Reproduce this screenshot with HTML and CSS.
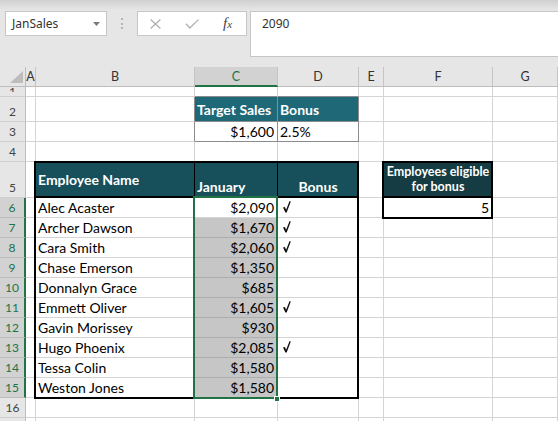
FILE: index.html
```html
<!DOCTYPE html>
<html>
<head>
<meta charset="utf-8">
<link rel="stylesheet" href="styles.css">
</head>
<body>
<div class="fbar">
  <div class="namebox"><span>JanSales</span><svg class="caret" width="7" height="4" viewBox="0 0 7 4"><path d="M0 0H7L3.5 4Z" fill="#7a7a7a"/></svg></div>
  <div class="grip"><i></i><i></i><i></i></div>
  <div class="btns">
    <svg width="11" height="10" viewBox="0 0 11 10"><path d="M0.6 0.5L10.4 9.5M10.4 0.5L0.6 9.5" stroke="#b0b0b0" stroke-width="1.2" fill="none"/></svg>
    <svg width="14" height="10" viewBox="0 0 14 10"><path d="M1 4.8L4.8 9L13.4 0.6" stroke="#b0b0b0" stroke-width="1.3" fill="none"/></svg>
    <span class="fx">f<small>x</small></span>
  </div>
  <div class="finput">2090</div>
</div>
<div class="sheetwrap">
<div class="sheet">
  <div class="corner"><svg width="13" height="12" viewBox="0 0 13 12"><path d="M0 12L13 0V12Z" fill="#bdbdbd"/></svg></div>
  <div class="ch">A</div><div class="ch">B</div><div class="ch sel">C</div><div class="ch">D</div><div class="ch">E</div><div class="ch">F</div><div class="ch">G</div>

  <div class="rh r1"><span>1</span></div><div class="c"></div><div class="c"></div><div class="c bt"></div><div class="c bt"></div><div class="c"></div><div class="c"></div><div class="c"></div>

  <div class="rh">2</div><div class="c"></div><div class="c bb"></div><div class="c ts">Target Sales</div><div class="c ts">Bonus</div><div class="c"></div><div class="c"></div><div class="c"></div>

  <div class="rh">3</div><div class="c"></div><div class="c bb"></div><div class="c g r">$1,600</div><div class="c g">2.5%</div><div class="c"></div><div class="c"></div><div class="c"></div>

  <div class="rh">4</div><div class="c"></div><div class="c"></div><div class="c"></div><div class="c"></div><div class="c"></div><div class="c"></div><div class="c"></div>

  <div class="rh">5</div><div class="c"></div><div class="c hd mid">Employee Name</div><div class="c hd">January</div><div class="c hd ctr">Bonus</div><div class="c"></div><div class="c hf">Employees eligible for bonus</div><div class="c"></div>

  <div class="rh sel">6</div><div class="c"></div><div class="c">Alec Acaster</div><div class="c r">$2,090</div><div class="c"><svg class="ck" width="8" height="12" viewBox="0 0 8 12"><path d="M0 6.6L1.9 5.9L3.1 8.7L6.6 0L7.8 0.5L3.7 11.6L2.4 11.6Z" fill="#111"/></svg></div><div class="c"></div><div class="c r">5</div><div class="c"></div>

  <div class="rh sel">7</div><div class="c"></div><div class="c">Archer Dawson</div><div class="c r sc">$1,670</div><div class="c"><svg class="ck" width="8" height="12" viewBox="0 0 8 12"><path d="M0 6.6L1.9 5.9L3.1 8.7L6.6 0L7.8 0.5L3.7 11.6L2.4 11.6Z" fill="#111"/></svg></div><div class="c"></div><div class="c"></div><div class="c"></div>

  <div class="rh sel">8</div><div class="c"></div><div class="c">Cara Smith</div><div class="c r sc">$2,060</div><div class="c"><svg class="ck" width="8" height="12" viewBox="0 0 8 12"><path d="M0 6.6L1.9 5.9L3.1 8.7L6.6 0L7.8 0.5L3.7 11.6L2.4 11.6Z" fill="#111"/></svg></div><div class="c"></div><div class="c"></div><div class="c"></div>

  <div class="rh sel">9</div><div class="c"></div><div class="c">Chase Emerson</div><div class="c r sc">$1,350</div><div class="c"></div><div class="c"></div><div class="c"></div><div class="c"></div>

  <div class="rh sel">10</div><div class="c"></div><div class="c">Donnalyn Grace</div><div class="c r sc">$685</div><div class="c"></div><div class="c"></div><div class="c"></div><div class="c"></div>

  <div class="rh sel">11</div><div class="c"></div><div class="c">Emmett Oliver</div><div class="c r sc">$1,605</div><div class="c"><svg class="ck" width="8" height="12" viewBox="0 0 8 12"><path d="M0 6.6L1.9 5.9L3.1 8.7L6.6 0L7.8 0.5L3.7 11.6L2.4 11.6Z" fill="#111"/></svg></div><div class="c"></div><div class="c"></div><div class="c"></div>

  <div class="rh sel">12</div><div class="c"></div><div class="c">Gavin Morissey</div><div class="c r sc">$930</div><div class="c"></div><div class="c"></div><div class="c"></div><div class="c"></div>

  <div class="rh sel">13</div><div class="c"></div><div class="c">Hugo Phoenix</div><div class="c r sc">$2,085</div><div class="c"><svg class="ck" width="8" height="12" viewBox="0 0 8 12"><path d="M0 6.6L1.9 5.9L3.1 8.7L6.6 0L7.8 0.5L3.7 11.6L2.4 11.6Z" fill="#111"/></svg></div><div class="c"></div><div class="c"></div><div class="c"></div>

  <div class="rh sel">14</div><div class="c"></div><div class="c">Tessa Colin</div><div class="c r sc">$1,580</div><div class="c"></div><div class="c"></div><div class="c"></div><div class="c"></div>

  <div class="rh sel">15</div><div class="c"></div><div class="c">Weston Jones</div><div class="c r sc">$1,580</div><div class="c"></div><div class="c"></div><div class="c"></div><div class="c"></div>

  <div class="rh">16</div><div class="c"></div><div class="c"></div><div class="c"></div><div class="c"></div><div class="c"></div><div class="c"></div><div class="c"></div>

  <div class="rh"></div><div class="c"></div><div class="c"></div><div class="c"></div><div class="c"></div><div class="c"></div><div class="c"></div><div class="c"></div>
</div>
<div class="marks">
  <div class="tbl"></div>
  <div class="fbox"></div>
  <div class="selbox"><i class="handle"></i></div>
</div>
</div>
</body>
</html>
```

FILE: styles.css
```css
* { box-sizing: border-box; margin: 0; padding: 0; }
html, body { width: 558px; height: 421px; overflow: hidden; }
body { background: #e6e6e6; font-family: Lato, "Liberation Sans", sans-serif; color: #000; }

.fbar {
  height: 67px;
  display: flex;
  align-items: flex-start;
  padding: 11px 0 0 5px;
  background: linear-gradient(#d0d0d0, #e6e6e6 10px, #e6e6e6);
  font-family: "Noto Sans", "Open Sans", sans-serif;
  font-size: 12px;
  color: #333;
}
.namebox {
  width: 102px; height: 25px;
  background: #fff;
  border: 1px solid #c6c6c6;
  display: flex; align-items: center; justify-content: space-between;
  padding: 0 6px 0 6px;
}
.grip {
  width: 30px; height: 25px;
  display: flex; flex-direction: column; align-items: center; justify-content: center; gap: 2.5px;
}
.grip i { display: block; width: 2px; height: 2px; background: #b4b4b4; }
.btns {
  width: 110px; height: 25px;
  background: #fff;
  border: 1px solid #c6c6c6;
  display: flex; align-items: center; gap: 24px;
  padding-left: 12px;
}
.fx { font-family: "Liberation Serif", serif; font-style: italic; font-size: 15px; color: #444; line-height: 1; }
.fx small { font-size: 11px; }
.finput {
  flex: 1;
  height: 46px;
  margin-left: 3px;
  background: #fff;
  border: 1px solid #c6c6c6;
  border-right: none;
  padding: 3px 0 0 11px;
}

.sheetwrap { display: grid; }
.sheet, .marks {
  grid-area: 1 / 1;
  display: grid;
  grid-template-columns: 26px 10px 159px 83px 81px 25px 109px 65px;
  grid-template-rows: 20px 10px 25px 20px 20px 36px repeat(12, 20px);
}
.sheet { background: #fff; font-size: 14px; line-height: 19px; }
.marks { pointer-events: none; }

.c {
  border-right: 1px solid #d4d4d4;
  border-bottom: 1px solid #d4d4d4;
  display: flex; align-items: flex-end;
  padding: 0 2px;
  white-space: nowrap; overflow: hidden;
}
.r { justify-content: flex-end; padding-right: 3px; }
.corner {
  background: #e6e6e6;
  border-right: 1px solid #bdbdbd; border-bottom: 1px solid #bdbdbd;
  display: flex; align-items: flex-end; justify-content: flex-end;
}
.corner svg { margin: 0 2px 3px 0; }
.ch {
  background: #e6e6e6;
  border-right: 1px solid #c4c4c4; border-bottom: 1px solid #bdbdbd;
  display: flex; align-items: center; justify-content: center;
  font-size: 12.5px; color: #333;
}
.ch.sel { background: #d2d2d2; color: #217346; border-bottom: 2px solid #217346; }
.rh {
  background: #e6e6e6;
  border-right: 1px solid #bdbdbd; border-bottom: 1px solid #cfcfcf;
  display: flex; align-items: flex-end; justify-content: center;
  font-size: 12px; color: #444; overflow: hidden;
}
.rh.sel { background: #d2d2d2; color: #217346; border-right: 2px solid #217346; border-bottom-color: #bcbcbc; }
.r1 { align-items: flex-start; }
.r1 span { display: block; margin-top: -5px; clip-path: inset(5px 0 9px 0); }

.bt { border-bottom-color: #8c8c8c; }
.bb { border-right-color: #8c8c8c; }
.g { border-color: #8c8c8c; }
.ts { background: #1e6878; color: #fff; font-weight: 700; align-items: center; border-color: #8c8c8c; }
.hd { background: #174f5a; color: #fff; font-weight: 700; border-right-color: #000; border-bottom: 2px solid #000; }
.mid { align-items: center; }
.ctr { justify-content: center; }
.hf {
  background: #143c42; color: #fff; font-weight: 700;
  font-size: 12.5px; line-height: 15.5px;
  white-space: normal; text-align: center;
  justify-content: center; align-items: center;
  border-bottom: 2px solid #000;
}
.sc { background: #c6c6c6; border-bottom-color: #adadad; }
.ck { display: block; margin: 0 0 4px 3px; }

.tbl { grid-row: 6 / 17; grid-column: 3 / 6; margin: -1px 0 -1px -2px; border: 2px solid #000; }
.fbox { grid-row: 6 / 8; grid-column: 7 / 8; margin: -1px 0 -1px -2px; border: 2px solid #000; }
.selbox { grid-row: 7 / 17; grid-column: 4 / 5; margin: -2px 0 -1px -2px; border: 2px solid #217346; position: relative; }
.handle { position: absolute; right: -4px; bottom: -5px; width: 6px; height: 6px; background: #217346; border: 1px solid #fff; }
```
